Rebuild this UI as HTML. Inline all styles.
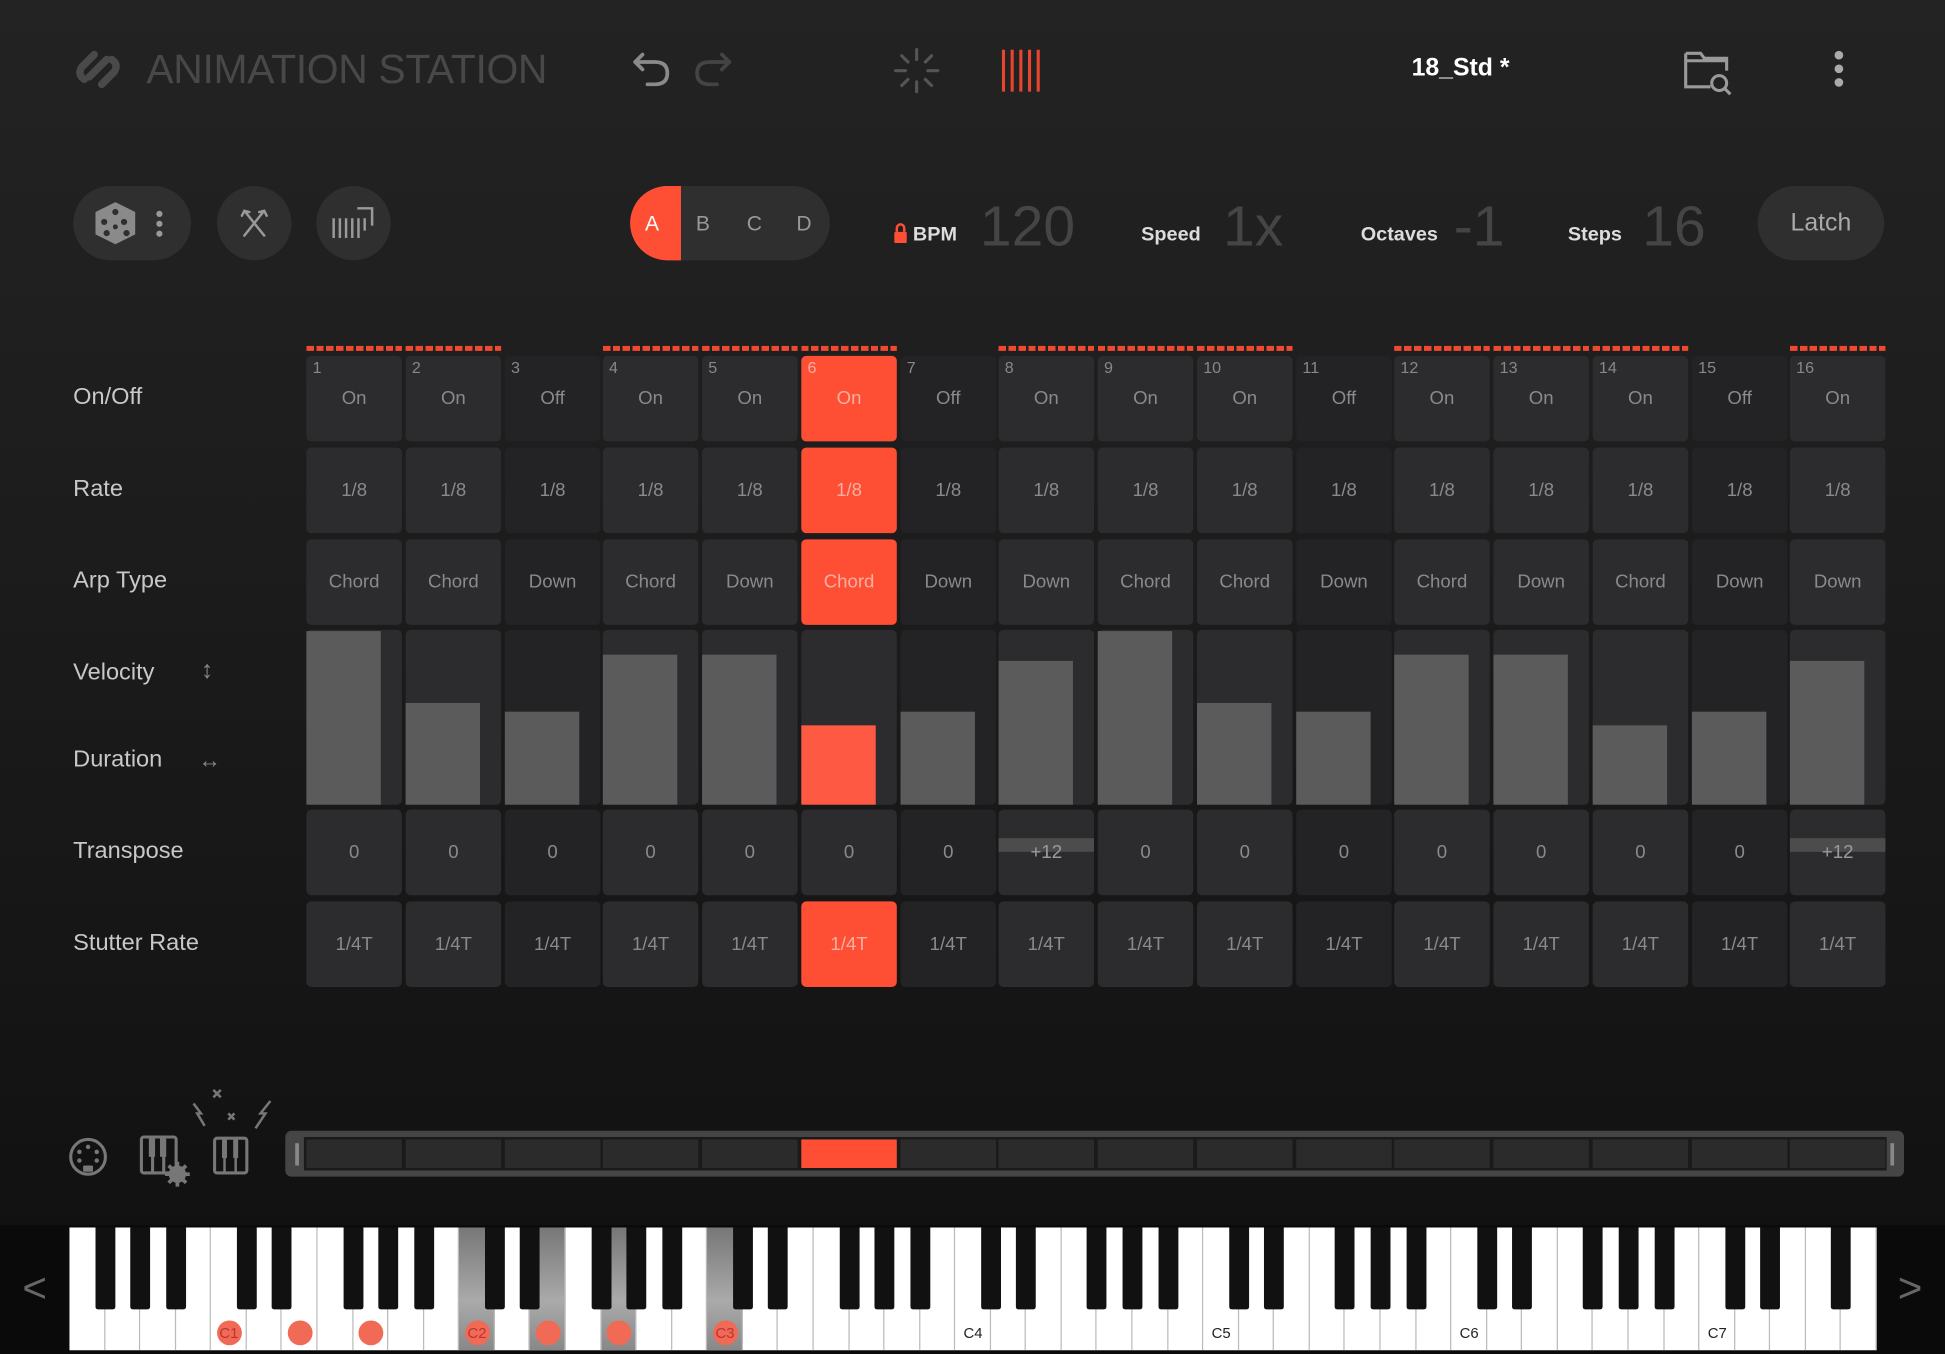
<!DOCTYPE html>
<html><head><meta charset="utf-8">
<style>
html,body{margin:0;padding:0;width:1945px;height:1354px;overflow:hidden;background:#121212}
#s{position:absolute;left:0;top:0;width:1568px;height:1092px;transform:scale(1.2404,1.2399);transform-origin:0 0;
background:linear-gradient(#232323 0%,#1e1e1e 30%,#161616 70%,#0f0f0f 100%);font-family:"Liberation Sans",sans-serif;overflow:hidden}
.a{position:absolute}
.cell{position:absolute;width:77px;border-radius:4px;color:#8a8a8a;font-size:15px;text-align:center}
.lbl{position:absolute;left:59px;color:#c8c8c8;font-size:19px}
.pill{position:absolute;background:#2f2f2f;border-radius:30px}
</style></head><body>
<div id="s">
<svg class="a" style="left:58px;top:38px" width="42" height="36" viewBox="0 0 42 36"><g fill="none" stroke="#4a4a4a" stroke-width="6" stroke-linecap="round"><path d="M18 6 L8 16 Q4 22 10 26"/><path d="M24 30 L34 20 Q38 14 32 10"/><path d="M14 24 L28 10"/></g></svg>
<div class="a" style="left:118px;top:37px;font-size:33px;color:#484848;letter-spacing:-0.3px">ANIMATION STATION</div>
<svg class="a" style="left:508px;top:40px" width="84" height="32" viewBox="0 0 84 32"><g fill="none" stroke-width="3" stroke-linecap="round" stroke-linejoin="round"><path d="M10 4 L4 10 L10 16 M4 10 H20 Q30 10 30 19 Q30 28 20 28 H14" stroke="#8a8a8a"/><path d="M74 4 L80 10 L74 16 M80 10 H64 Q54 10 54 19 Q54 28 64 28 H70" stroke="#444"/></g></svg>
<svg class="a" style="left:720px;top:38px" width="38" height="38" viewBox="0 0 38 38"><g stroke="#555" stroke-width="2.5" stroke-linecap="round"><path d="M19 2v8M19 28v8M2 19h8M28 19h8M7 7l5 5M26 26l5 5M7 31l5-5M26 12l5-5"/></g></svg>
<svg class="a" style="left:806px;top:40px" width="34" height="34"><g stroke="#e8452e" stroke-width="2.5"><path d="M3 0v34M10 0v34M17 0v34M24 0v34M31 0v34"/></g></svg>
<div class="a" style="left:1138px;top:44px;font-size:20px;color:#fff;font-weight:bold">18_Std *</div>
<svg class="a" style="left:1356px;top:38px" width="44" height="40" viewBox="0 0 44 40"><g fill="none" stroke="#9a9a9a" stroke-width="2.5"><path d="M3 5h12l3 4h18v10M3 5v27h20"/><path d="M3 11h33"/><circle cx="30" cy="29" r="6"/><path d="M34 33l5 5"/></g></svg>
<div class="a" style="left:1479px;top:41px;width:8px"><div style="width:7px;height:7px;border-radius:4px;background:#aaa;margin-bottom:4px"></div><div style="width:7px;height:7px;border-radius:4px;background:#aaa;margin-bottom:4px"></div><div style="width:7px;height:7px;border-radius:4px;background:#aaa"></div></div>

<div class="pill" style="left:59px;top:150px;width:95px;height:60px"></div>
<svg class="a" style="left:74px;top:161px" width="38" height="38" viewBox="0 0 38 38"><path d="M19 2L35 10V28L19 36L3 28V10Z" fill="#8a8a8a"/><g fill="#2f2f2f"><circle cx="19" cy="10" r="2.5"/><circle cx="10" cy="18" r="2.5"/><circle cx="12" cy="27" r="2.5"/><circle cx="26" cy="18" r="2.5"/><circle cx="28" cy="27" r="2.5"/><circle cx="19" cy="22" r="2"/></g></svg>
<div class="a" style="left:126px;top:170px"><div style="width:5px;height:5px;border-radius:3px;background:#999;margin-bottom:3px"></div><div style="width:5px;height:5px;border-radius:3px;background:#999;margin-bottom:3px"></div><div style="width:5px;height:5px;border-radius:3px;background:#999"></div></div>
<div class="pill" style="left:175px;top:150px;width:60px;height:60px"></div>
<svg class="a" style="left:193px;top:166px" width="24" height="28" viewBox="0 0 24 28"><g fill="none" stroke="#999" stroke-width="2" stroke-linecap="round"><path d="M4 4L12 14L20 4M4 24L12 14L20 24M2 8L4 4L8 5M22 8L20 4L16 5"/></g></svg>
<div class="pill" style="left:255px;top:150px;width:60px;height:60px"></div>
<svg class="a" style="left:266px;top:164px" width="38" height="30" viewBox="0 0 38 30"><g stroke="#999" stroke-width="2" fill="none"><path d="M3 12v16M8 12v16M13 12v16M18 12v16M23 12v16M28 12v10M22 4h12v14"/></g></svg>
<div class="pill" style="left:508px;top:150px;width:161px;height:60px"></div>
<div class="a" style="left:508px;top:150px;width:41px;height:60px;background:#fe4f35;border-radius:30px 0 0 30px"></div>
<div class="a" style="left:520px;top:171px;color:#fff;font-size:17px">A</div>
<div class="a" style="left:561px;top:171px;color:#999;font-size:17px">B</div>
<div class="a" style="left:602px;top:171px;color:#999;font-size:17px">C</div>
<div class="a" style="left:642px;top:171px;color:#999;font-size:17px">D</div>
<svg class="a" style="left:720px;top:179px" width="12" height="17" viewBox="0 0 12 17"><path d="M3 8V5a3 3 0 016 0v3" stroke="#fe4f35" stroke-width="2" fill="none"/><rect x="1" y="8" width="10" height="9" rx="1" fill="#fe4f35"/></svg>
<div class="a" style="left:736px;top:181px;color:#ddd;font-size:16px;font-weight:bold">BPM</div>
<div class="a" style="left:790px;top:155px;color:#454545;font-size:46px">120</div>
<div class="a" style="left:920px;top:181px;color:#ddd;font-size:16px;font-weight:bold">Speed</div>
<div class="a" style="left:986px;top:155px;color:#454545;font-size:46px">1x</div>
<div class="a" style="left:1097px;top:181px;color:#ddd;font-size:16px;font-weight:bold">Octaves</div>
<div class="a" style="left:1172px;top:155px;color:#454545;font-size:46px">-1</div>
<div class="a" style="left:1264px;top:181px;color:#ddd;font-size:16px;font-weight:bold">Steps</div>
<div class="a" style="left:1324px;top:155px;color:#454545;font-size:46px">16</div>
<div class="pill" style="left:1417px;top:150px;width:102px;height:60px"></div>
<div class="a" style="left:1417px;top:169px;width:102px;text-align:center;color:#aaa;font-size:20px">Latch</div>

<div class="lbl" style="top:310px">On/Off</div>
<div class="lbl" style="top:384px">Rate</div>
<div class="lbl" style="top:458px">Arp Type</div>
<div class="lbl" style="top:532px">Velocity</div>
<div class="a" style="left:162px;top:530px;color:#888;font-size:20px">↕</div>
<div class="lbl" style="top:602px">Duration</div>
<div class="a" style="left:160px;top:603px;color:#888;font-size:18px">↔</div>
<div class="lbl" style="top:676px">Transpose</div>
<div class="lbl" style="top:750px">Stutter Rate</div>

<div id="grid"></div>

<svg class="a" style="left:54px;top:916px" width="34" height="34" viewBox="0 0 34 34"><circle cx="17" cy="17" r="14" fill="none" stroke="#777" stroke-width="2.5"/><g fill="#777"><circle cx="17" cy="9" r="1.8"/><circle cx="10" cy="13" r="1.8"/><circle cx="24" cy="13" r="1.8"/><circle cx="10" cy="20" r="1.8"/><circle cx="24" cy="20" r="1.8"/><rect x="13" y="24" width="8" height="5" rx="1"/></g></svg>
<svg class="a" style="left:112px;top:914px" width="44" height="46" viewBox="0 0 44 46"><g fill="none" stroke="#777" stroke-width="2.5"><rect x="2" y="3" width="28" height="29" rx="2"/><path d="M11 3v29M20 3v29"/></g><g fill="#777"><rect x="8" y="3" width="5" height="16"/><rect x="17" y="3" width="5" height="16"/></g><circle cx="31" cy="33" r="7" fill="#777"/><circle cx="31" cy="33" r="2.5" fill="#111"/><g stroke="#777" stroke-width="3"><path d="M31 23v20M21 33h20M24 26l14 14M38 26l-14 14"/></g></svg>
<svg class="a" style="left:150px;top:874px" width="72" height="78" viewBox="0 0 72 78"><g stroke="#777" stroke-width="2" fill="none"><path d="M22 5l6 6M28 5l-6 6M34 24l5 5M39 24l-5 5"/><path d="M6 16l6 8-3 0 6 10M68 14l-8 10h4l-8 12"/><rect x="23" y="44" width="26" height="28" rx="2" stroke-width="2.5"/><path d="M31 44v28M40 44v28"/></g><g fill="#777"><rect x="29" y="44" width="4" height="16"/><rect x="38" y="44" width="4" height="16"/></g></svg>

<div class="a" style="left:230px;top:912px;width:1305px;height:37px;background:#454545;border-radius:5px"></div>
<div class="a" style="left:238px;top:922px;width:3px;height:18px;background:#888"></div>
<div class="a" style="left:1524px;top:922px;width:3px;height:18px;background:#888"></div>
<div class="a" style="left:245px;top:917px;width:1276px;height:27px;background:#1a1a1a"></div>
<div id="strip"></div>

<div class="a" style="left:0;top:988px;width:1568px;height:104px;background:#0a0a0a"></div>
<div id="kb" class="a" style="left:56px;top:990px;width:1457px;height:99px;background:#fff;overflow:hidden"></div>
<div class="a" style="left:18px;top:1020px;color:#666;font-size:34px">&lt;</div>
<div class="a" style="left:1530px;top:1020px;color:#666;font-size:34px">&gt;</div>
</div>
<script>
var G=document.getElementById('grid'),h='';
var on=[1,1,0,1,1,1,0,1,1,1,0,1,1,1,0,1];
var arp=['Chord','Chord','Down','Chord','Down','Chord','Down','Down','Chord','Chord','Down','Chord','Down','Chord','Down','Down'];
var vt=[509,567,574,528,528,585,574,533,509,567,574,528,528,585,574,533];
var rows=[[287,69],[361,69],[435,69],[508,141],[653,69],[727,69]];
for(var i=0;i<16;i++){
 var x=Math.round(247+i*79.75);
 var bg=on[i]?'#2c2c2e':'#232325';
 if(on[i]){h+='<div class="a" style="left:'+x+'px;top:279px;width:77px;height:4px;background:repeating-linear-gradient(90deg,#f0492f 0 6px,transparent 6px 8px)"></div>';}
 var r6=(i==5);
 var txt=[on[i]?'On':'Off','1/8',arp[i],'',(i==7||i==15)?'+12':'0','1/4T'];
 for(var r=0;r<6;r++){
  var red=r6&&r!=3&&r!=4;
  var c=red?'#fe4f35':bg;
  h+='<div class="cell" style="left:'+x+'px;top:'+rows[r][0]+'px;height:'+rows[r][1]+'px;background:'+c+';line-height:'+rows[r][1]+'px;'+(red?'color:#f9b0a2':'')+'">'+txt[r]+'</div>';
 }
 h+='<div class="a" style="left:'+(x+5)+'px;top:289px;color:'+(r6?'#f9b0a2':'#888')+';font-size:13px">'+(i+1)+'</div>';
 h+='<div class="a" style="left:'+x+'px;top:'+vt[i]+'px;width:60px;height:'+(649-vt[i])+'px;background:'+(r6?'#fe5a43':'#5b5b5b')+'"></div>';
 if(i==7||i==15)h+='<div class="a" style="left:'+x+'px;top:676px;width:77px;height:11px;background:#555;opacity:.8"></div><div class="cell" style="left:'+x+'px;top:653px;height:69px;line-height:69px;color:#999">+12</div>';
}
G.innerHTML=h;
var S='';for(i=0;i<16;i++){var x=Math.round(247+i*79.75);S+='<div class="a" style="left:'+x+'px;top:919px;width:77px;height:23px;background:'+(i==5?'#fe4f35':'#2b2b2b')+'"></div>';}
document.getElementById('strip').innerHTML=S;
var K='',w=1457/51;
var names=['F','G','A','B','C','D','E'];
var dots=[4,6,8,11,13,15,18];var grey=[11,13,15,18];
for(i=0;i<51;i++){var x=i*w;
 if(grey.indexOf(i)>=0)K+='<div class="a" style="left:'+x+'px;top:0;width:'+w+'px;height:99px;background:linear-gradient(#777,#aaa 60%,#888)"></div>';
 K+='<div class="a" style="left:'+(x+w-1)+'px;top:0;width:1px;height:99px;background:#bbb"></div>';
 if(dots.indexOf(i)>=0)K+='<div class="a" style="left:'+(x+w/2-10)+'px;top:75px;width:20px;height:20px;border-radius:10px;background:#f06a55"></div>';
 var n=names[i%7];
 if(n=='C'){var o=Math.floor((i-4)/7)+1;K+='<div class="a" style="left:'+x+'px;top:78px;width:'+w+'px;text-align:center;font-size:12px;color:'+(o<=3?'#b33':'#222')+'">C'+o+'</div>';}
}
for(i=0;i<51;i++){var n=names[i%7];var x=(i+1)*w;
 if(n=='B'||n=='E')continue;
 if(i==50)break;
 K+='<div class="a" style="left:'+(x-8)+'px;top:0;width:16px;height:66px;background:#111;border-radius:0 0 2px 2px"></div>';}
document.getElementById('kb').innerHTML=K;
</script>
</body></html>
